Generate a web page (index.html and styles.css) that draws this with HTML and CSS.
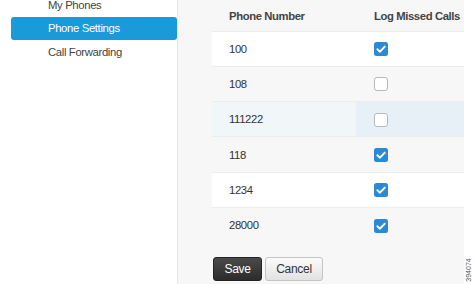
FILE: index.html
```html
<!DOCTYPE html>
<html>
<head>
<meta charset="utf-8">
<link rel="stylesheet" href="styles.css">
</head>
<body>
<div class="page">
  <aside class="sidebar">
    <ul class="nav">
      <li class="nav-item">My Phones</li>
      <li class="nav-item active">Phone Settings</li>
      <li class="nav-item">Call Forwarding</li>
    </ul>
  </aside>
  <main class="main">
    <div class="content">
      <table class="grid">
        <thead>
          <tr><th class="c1">Phone Number</th><th class="c2">Log Missed Calls</th></tr>
        </thead>
        <tbody>
          <tr class="odd"><td class="c1">100</td><td class="c2"><span class="cb on"><svg viewBox="0 0 14 14" width="14" height="14"><rect x="0" y="0" width="14" height="14" rx="2.5" fill="#2b8ad6"/><path d="M3.4 7.2 L6 9.7 L10.8 4.6" fill="none" stroke="#fff" stroke-width="1.9" stroke-linecap="round" stroke-linejoin="round"/></svg></span></td></tr>
          <tr class="even"><td class="c1">108</td><td class="c2"><span class="cb off"></span></td></tr>
          <tr class="hover"><td class="c1">111222</td><td class="c2"><span class="cb off"></span></td></tr>
          <tr class="even"><td class="c1">118</td><td class="c2"><span class="cb on"><svg viewBox="0 0 14 14" width="14" height="14"><rect x="0" y="0" width="14" height="14" rx="2.5" fill="#2b8ad6"/><path d="M3.4 7.2 L6 9.7 L10.8 4.6" fill="none" stroke="#fff" stroke-width="1.9" stroke-linecap="round" stroke-linejoin="round"/></svg></span></td></tr>
          <tr class="odd"><td class="c1">1234</td><td class="c2"><span class="cb on"><svg viewBox="0 0 14 14" width="14" height="14"><rect x="0" y="0" width="14" height="14" rx="2.5" fill="#2b8ad6"/><path d="M3.4 7.2 L6 9.7 L10.8 4.6" fill="none" stroke="#fff" stroke-width="1.9" stroke-linecap="round" stroke-linejoin="round"/></svg></span></td></tr>
          <tr class="even"><td class="c1">28000</td><td class="c2"><span class="cb on"><svg viewBox="0 0 14 14" width="14" height="14"><rect x="0" y="0" width="14" height="14" rx="2.5" fill="#2b8ad6"/><path d="M3.4 7.2 L6 9.7 L10.8 4.6" fill="none" stroke="#fff" stroke-width="1.9" stroke-linecap="round" stroke-linejoin="round"/></svg></span></td></tr>
        </tbody>
      </table>
      <div class="actions">
        <button class="btn btn-primary">Save</button>
        <button class="btn btn-default">Cancel</button>
      </div>
    </div>
    <div class="strip"><span class="fig-id">394074</span></div>
  </main>
</div>
</body>
</html>
```

FILE: styles.css
```css
html, body {
  margin: 0;
  padding: 0;
}
body {
  width: 474px;
  height: 284px;
  overflow: hidden;
  background: #fff;
  font-family: "Liberation Sans", Arial, sans-serif;
  font-size: 11.3px;
  letter-spacing: -0.35px;
  color: #333;
}
.page {
  display: flex;
  height: 284px;
}
.sidebar {
  width: 177px;
  flex: none;
  background: #fff;
  border-right: 1px solid #e6e6e6;
}
.nav {
  list-style: none;
  margin: -6px 0 0 11px;
  padding: 0;
  display: flex;
  flex-direction: column;
  gap: 1px;
}
.nav-item {
  height: 23px;
  line-height: 23px;
  padding-left: 37px;
  color: #444;
  border-radius: 3px;
  white-space: nowrap;
}
.nav-item:first-child {
  height: 22px;
}
.nav-item.active {
  background: #1a9ad9;
  color: #fff;
}
.main {
  flex: 1;
  display: flex;
  background: #f7f7f7;
}
.content {
  flex: 1;
  padding-left: 34px;
}
.grid {
  border-collapse: collapse;
  width: 252px;
  table-layout: fixed;
}
.grid th {
  height: 31px;
  text-align: left;
  font-weight: bold;
  color: #444;
  padding: 2px 0 0 0;
  box-sizing: border-box;
  white-space: nowrap;
  letter-spacing: -0.4px;
}
.grid td {
  height: 35.3px;
  padding: 0;
  border-top: 1px solid #ececec;
  box-sizing: border-box;
  vertical-align: middle;
}
.grid .c1 {
  width: 144px;
  padding-left: 17px;
}
.grid .c2 {
  padding-left: 18px;
}
.grid tr.odd td {
  background: #fff;
}
.grid tr.even td {
  background: #f7f7f7;
}
.grid tr.hover td.c1 {
  background: #f1f6f9;
}
.grid tr.hover td.c2 {
  background: #e7f0f7;
}
.cb {
  display: block;
  width: 14px;
  height: 14px;
  margin-top: 1px;
}
.cb svg {
  display: block;
}
.cb.off {
  box-sizing: border-box;
  background: #fff;
  border: 1px solid #b9b9b9;
  border-radius: 3px;
}
.actions {
  display: flex;
  gap: 3px;
  margin-top: 14px;
  padding-left: 1px;
}
.btn {
  height: 24px;
  border-radius: 3px;
  font-family: "Liberation Sans", Arial, sans-serif;
  font-size: 12px;
  letter-spacing: -0.3px;
  padding: 0;
  box-sizing: border-box;
}
.btn-primary {
  width: 49px;
  background: linear-gradient(#4a4a4a, #2c2c2c);
  border: 1px solid #222;
  color: #fff;
}
.btn-default {
  width: 58px;
  background: linear-gradient(#fbfbfb, #e2e2e2);
  border: 1px solid #c4c4c4;
  color: #333;
}
.strip {
  width: 10px;
  flex: none;
  background: #fff;
  position: relative;
}
.fig-id {
  position: absolute;
  left: 0;
  top: 266px;
  width: 30px;
  margin-left: -10px;
  transform: rotate(-90deg);
  font-size: 7px;
  letter-spacing: 0;
  color: #555;
  text-align: center;
  line-height: 8px;
}
```
